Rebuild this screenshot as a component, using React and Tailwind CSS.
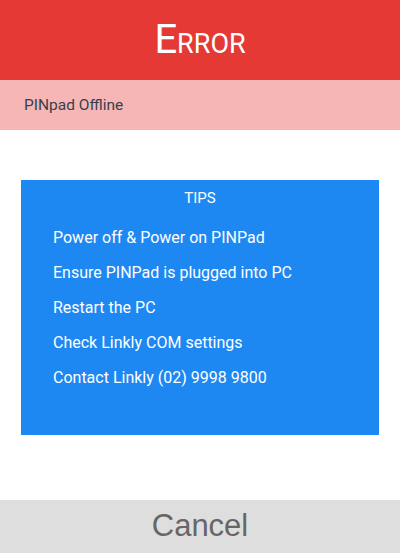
import React from 'react';

const tips = [
  'Power off & Power on PINPad',
  'Ensure PINPad is plugged into PC',
  'Restart the PC',
  'Check Linkly COM settings',
  'Contact Linkly (02) 9998 9800',
];

export default function App() {
  return (
    <div className="flex h-[553px] w-[400px] flex-col bg-white font-['Roboto',sans-serif]">
      {/* Header */}
      <div className="flex h-20 items-center justify-center bg-[#e53935]">
        <h1 className="flex items-baseline font-normal leading-none text-white">
          <span className="text-[40px]">E</span>
          <span className="text-[27px]">RROR</span>
        </h1>
      </div>

      {/* Status message */}
      <div className="flex h-[50px] items-center bg-[#f6b6b6] px-6 pt-[2px]">
        <span className="text-[15.5px] text-[#3a3f4a]">PINpad Offline</span>
      </div>

      {/* Tips panel */}
      <div className="px-[21px] pt-[50px]">
        <div className="h-[255px] bg-[#1e88f2] text-white">
          <div className="pt-[8px] text-center text-[15px] leading-[20px]">TIPS</div>
          <ul className="mt-[20px] flex flex-col gap-[15px] pl-8">
            {tips.map((t) => (
              <li key={t} className="text-[16px] leading-[20px]">{t}</li>
            ))}
          </ul>
        </div>
      </div>

      {/* Cancel */}
      <button className="mt-auto flex h-[53px] w-full items-center justify-center bg-[#dedede] font-['Liberation_Sans',Arial,sans-serif] text-[31px] text-[#666666]">
        Cancel
      </button>
    </div>
  );
}
